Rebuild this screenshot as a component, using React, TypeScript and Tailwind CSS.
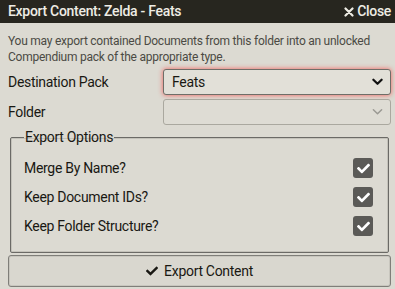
import React from "react";

const Check = ({ className = "" }: { className?: string }) => (
  <svg viewBox="0 0 512 512" className={className} fill="currentColor">
    <path d="M173.9 439.4l-166.4-166.4c-10-10-10-26.2 0-36.2l36.2-36.2c10-10 26.2-10 36.2 0L192 312.7 432.1 72.6c10-10 26.2-10 36.2 0l36.2 36.2c10 10 10 26.2 0 36.2L210.1 439.4c-10 10-26.2 10-36.2 0z" />
  </svg>
);

const Chevron = ({ color, sw }: { color: string; sw: number }) => (
  <svg viewBox="0 0 12 8" width="11" height="8" fill="none" stroke={color} strokeWidth={sw} strokeLinecap="round" strokeLinejoin="round">
    <path d="M1.5 1.5 L6 6 L10.5 1.5" />
  </svg>
);

const Box = () => (
  <div className="w-[20px] h-[20px] rounded-[3px] bg-[#5b5a57] flex items-center justify-center text-white">
    <Check className="w-[13px] h-[13px]" />
  </div>
);

export default function App() {
  const font = { fontFamily: "Roboto, 'Noto Sans', sans-serif" };
  return (
    <div className="w-[395px] h-[289px] overflow-hidden bg-[#dcdad2] text-[#191813] tracking-[-0.3px]" style={font}>
      <div className="h-[23px] bg-[#27261f] flex items-center justify-between pl-[8px] pr-[4px] text-[#eeece4] text-[14px]">
        <span className="font-medium">Export Content: Zelda - Feats</span>
        <span className="flex items-center gap-[3px] font-medium">
          <svg viewBox="0 0 10 10" width="10" height="10" stroke="#eeece4" strokeWidth="2.2" strokeLinecap="round">
            <path d="M1.5 1.5 L8.5 8.5 M8.5 1.5 L1.5 8.5" />
          </svg>
          Close
        </span>
      </div>
      <div className="pl-[8px] pr-[4px] pt-[10px] flex flex-col">
        <p className="text-[12px] leading-[16px] text-[#4b4a44] tracking-[-0.25px]">
          You may export contained Documents from this folder into an unlocked Compendium pack of the appropriate type.
        </p>
        <div className="flex items-center mt-[4px] h-[26px]">
          <label className="flex-1 text-[14px]">Destination Pack</label>
          <div className="w-[228px] h-[26px] border border-[#6f6e68] rounded-[3px] bg-[#e2e0d8] shadow-[0_0_5px_rgba(255,40,40,0.7)] flex items-center justify-between pl-[8px] pr-[7px] text-[14px]">
            <span>Feats</span>
            <Chevron color="#111" sw={2.4} />
          </div>
        </div>
        <div className="flex items-center mt-[4px] h-[26px]">
          <label className="flex-1 text-[14px]">Folder</label>
          <div className="w-[228px] h-[26px] border border-[#aaa89f] rounded-[3px] bg-[#dedcd4] flex items-center justify-end pr-[7px]">
            <Chevron color="#9a9993" sw={1.6} />
          </div>
        </div>
        <fieldset className="mt-[2px] mx-[2px] border border-[#6b6a66] shadow-[inset_0_0_0_1px_#c4c2ba] rounded-[2px] px-[13px] pb-[13px] pt-[4px]">
          <legend className="px-[1px] text-[14px]">Export Options</legend>
          {["Merge By Name?", "Keep Document IDs?", "Keep Folder Structure?"].map((t) => (
            <div key={t} className="flex items-center justify-between h-[26px] mt-[3px] pr-[2px]">
              <span className="text-[14px]">{t}</span>
              <Box />
            </div>
          ))}
        </fieldset>
        <button className="mt-[2px] h-[32px] w-full border border-[#7f7e79] shadow-[inset_0_0_0_1px_#c8c6be] rounded-[3px] bg-[#d9d7cf] flex items-center justify-center gap-[6px] text-[14px]">
          <Check className="w-[12px] h-[12px]" />
          Export Content
        </button>
      </div>
    </div>
  );
}
